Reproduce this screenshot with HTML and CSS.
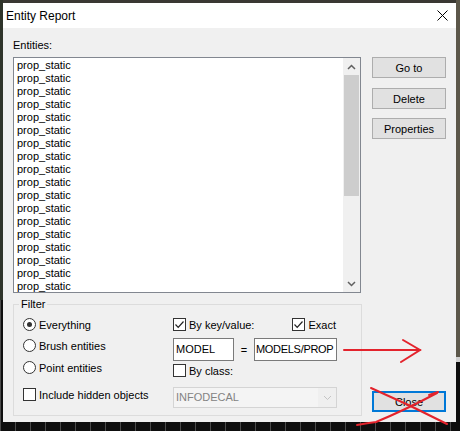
FILE: index.html
```html
<!DOCTYPE html>
<html>
  <head>
    <title>Entity Report</title>
    <link rel="stylesheet" href="styles.css">
  </head>
  <body>
    <div class="screen">
      <div class="window">
        <div class="titlebar">
          <span class="title">Entity Report</span>
          <svg class="close-x" width="11" height="11" viewBox="0 0 11 11"><path d="M0.5 0.5 L10.5 10.5 M10.5 0.5 L0.5 10.5" stroke="#000" stroke-width="1" fill="none"/></svg>
        </div>
        <div class="client">
          <div class="entities-label">Entities:</div>

          <div class="listbox">
            <div class="items">
              <div>prop_static</div>
              <div>prop_static</div>
              <div>prop_static</div>
              <div>prop_static</div>
              <div>prop_static</div>
              <div>prop_static</div>
              <div>prop_static</div>
              <div>prop_static</div>
              <div>prop_static</div>
              <div>prop_static</div>
              <div>prop_static</div>
              <div>prop_static</div>
              <div>prop_static</div>
              <div>prop_static</div>
              <div>prop_static</div>
              <div>prop_static</div>
              <div>prop_static</div>
              <div>prop_static</div>
            </div>
            <div class="scrollbar">
              <div class="sb-btn">
                <svg width="9" height="6" viewBox="0 0 9 6"><path d="M1 5 L4.5 1.5 L8 5" stroke="#606060" stroke-width="1.5" fill="none"/></svg>
              </div>
              <div class="sb-track"><div class="sb-thumb"></div></div>
              <div class="sb-btn">
                <svg width="9" height="6" viewBox="0 0 9 6"><path d="M1 1 L4.5 4.5 L8 1" stroke="#606060" stroke-width="1.5" fill="none"/></svg>
              </div>
            </div>
          </div>

          <div class="side-buttons">
            <button class="btn">Go to</button>
            <button class="btn btn-delete">Delete</button>
            <button class="btn btn-props">Properties</button>
          </div>

          <fieldset class="filter">
            <legend>Filter</legend>
            <div class="filter-body">
              <div class="filter-left">
                <label class="opt row-1"><span class="radio on"><span class="dot"></span></span>Everything</label>
                <label class="opt row-2"><span class="radio"></span>Brush entities</label>
                <label class="opt row-3"><span class="radio"></span>Point entities</label>
                <label class="opt row-4"><span class="check"></span>Include hidden objects</label>
              </div>
              <div class="filter-right">
                <div class="key-row">
                  <label class="opt"><span class="check"><svg width="11" height="11" viewBox="0 0 11 11"><path d="M1.5 5.5 L4.2 8.3 L9.5 2.5" stroke="#222" stroke-width="1.2" fill="none"/></svg></span>By key/value:</label>
                  <label class="opt"><span class="check"><svg width="11" height="11" viewBox="0 0 11 11"><path d="M1.5 5.5 L4.2 8.3 L9.5 2.5" stroke="#222" stroke-width="1.2" fill="none"/></svg></span>Exact</label>
                </div>
                <div class="edit-row">
                  <div class="edit edit-key">MODEL</div>
                  <span class="eq">=</span>
                  <div class="edit edit-value">MODELS/PROP</div>
                </div>
                <label class="opt class-row"><span class="check"></span>By class:</label>
                <div class="combo">
                  <span class="combo-text">INFODECAL</span>
                  <span class="combo-arrow">
                    <svg width="9" height="6" viewBox="0 0 9 6"><path d="M1 1 L4.5 4.5 L8 1" stroke="#c4c4c4" stroke-width="1" fill="none"/></svg>
                  </span>
                </div>
              </div>
            </div>
          </fieldset>

          <button class="btn btn-close">Close</button>
        </div>
      </div>

      <!-- red marks drawn on top of the screenshot -->
      <svg class="scribble" width="460" height="431" viewBox="0 0 460 431">
        <g stroke="#e3232c" stroke-width="2" fill="none" stroke-linecap="round">
          <path d="M344 350 L420 350"/>
          <path d="M403 340 L420 350 L401 362"/>
          <path d="M371 388 Q410 405 447 424"/>
          <path d="M357 425 Q368 423 376 422 Q405 410 437 393"/>
          <path d="M429 395 L438 392"/>
        </g>
      </svg>
    </div>
  </body>
</html>
```

FILE: styles.css
```css
body {
  margin: 0;
  background: #0e0e0e;
  font-family: "Liberation Sans", Arial, sans-serif;
  font-size: 11px;
  color: #000;
}

/* the game/editor around the dialog */
.screen {
  position: relative;
  width: 460px;
  height: 431px;
  overflow: hidden;
  box-sizing: border-box;
  padding: 3px 0 0 3px;
  background:
    linear-gradient(to bottom, #5c574a 0, #5c574a 357px, #d0d0d0 357px, #d0d0d0 362px, transparent 362px) right top / 4px 100% no-repeat,
    linear-gradient(to bottom, #2f342a 0, #2f342a 300px, transparent 300px) left top / 3px 100% no-repeat,
    linear-gradient(to bottom, #3a3833 0, #3a3833 3px, transparent 3px) left top / 100% 3px no-repeat,
    repeating-linear-gradient(to right, #4a4a4a 0, #4a4a4a 1px, transparent 1px, transparent 15px),
    #0e0e0e;
}

.window {
  width: 453px;
  height: 419px;
  background: #f0f0f0;
}

.titlebar {
  height: 25px;
  background: #fff;
  display: flex;
  align-items: center;
  justify-content: space-between;
  padding: 0 8px 0 3px;
}
.title {
  font-size: 12px;
}

.client {
  display: grid;
  grid-template-columns: 349px 74px;
  column-gap: 10px;
  align-items: start;
  padding: 11px 0 0 10px;
}

.entities-label {
  grid-column: 1 / 3;
  line-height: 13px;
  margin-bottom: 5px;
}

/* list */
.listbox {
  width: 348px;
  height: 236px;
  box-sizing: border-box;
  border: 1px solid #828790;
  background: #fff;
  display: flex;
}
.items {
  flex: 1;
  overflow: hidden;
  padding: 1px 0 0 3px;
  line-height: 13px;
  white-space: nowrap;
}
.scrollbar {
  width: 17px;
  display: flex;
  flex-direction: column;
  background: #f0f0f0;
}
.sb-btn {
  height: 17px;
  display: flex;
  align-items: center;
  justify-content: center;
}
.sb-track {
  flex: 1;
}
.sb-thumb {
  height: 121px;
  margin: 0 1px;
  background: #cdcdcd;
}

/* buttons */
.btn {
  box-sizing: border-box;
  width: 74px;
  height: 21px;
  padding: 0;
  border: 1px solid #adadad;
  background: #e1e1e1;
  font-family: "Liberation Sans", Arial, sans-serif;
  font-size: 11px;
  color: #000;
}
.side-buttons {
  display: flex;
  flex-direction: column;
}
.btn-delete {
  margin-top: 10px;
}
.btn-props {
  margin-top: 9px;
}
.btn-close {
  margin-top: 98px;
  border: 2px solid #0078d7;
}

/* filter group */
.filter {
  box-sizing: border-box;
  width: 349px;
  height: 118px;
  margin: 5px 0 0 0;
  padding: 0;
  border: 1px solid #dcdcdc;
  min-width: 0;
}
.filter legend {
  margin-left: 5px;
  padding: 0 2px;
  line-height: 13px;
}
.filter-body {
  display: flex;
  padding-left: 9px;
}
.filter-left {
  width: 150px;
  display: flex;
  flex-direction: column;
}
.filter-right {
  width: 164px;
  display: flex;
  flex-direction: column;
}

.opt {
  display: flex;
  align-items: center;
  gap: 3px;
  height: 13px;
  white-space: nowrap;
}
.row-1 { margin-top: 7px; }
.row-2 { margin-top: 8px; }
.row-3 { margin-top: 9px; }
.row-4 { margin-top: 14px; }

.radio {
  box-sizing: border-box;
  width: 13px;
  height: 13px;
  border: 1px solid #333;
  border-radius: 50%;
  background: #fff;
  display: flex;
  align-items: center;
  justify-content: center;
}
.radio .dot {
  width: 5px;
  height: 5px;
  border-radius: 50%;
  background: #333;
}
.check {
  box-sizing: border-box;
  width: 13px;
  height: 13px;
  border: 1px solid #333;
  background: #fff;
  display: flex;
}

.key-row {
  display: flex;
  justify-content: space-between;
  margin-top: 7px;
  padding-right: 1px;
}
.edit-row {
  display: flex;
  align-items: center;
  margin-top: 7px;
}
.edit {
  box-sizing: border-box;
  height: 23px;
  line-height: 21px;
  padding: 0 2px;
  border: 1px solid #7a7a7a;
  background: #fff;
  overflow: hidden;
  white-space: nowrap;
}
.edit-key {
  width: 61px;
}
.edit-value {
  width: 83px;
  padding: 0 1px;
  letter-spacing: -0.3px;
}
.eq {
  width: 20px;
  text-align: center;
}
.class-row {
  margin-top: 3px;
}
.combo {
  box-sizing: border-box;
  height: 21px;
  margin-top: 10px;
  border: 1px solid #d4d4d4;
  background: #efefef;
  display: flex;
}
.combo-text {
  flex: 1;
  background: #f4f4f4;
  color: #838383;
  padding-left: 2px;
  line-height: 19px;
}
.combo-arrow {
  width: 18px;
  display: flex;
  align-items: center;
  justify-content: center;
}

.scribble {
  position: absolute;
  left: 0;
  top: 0;
  pointer-events: none;
}
```
